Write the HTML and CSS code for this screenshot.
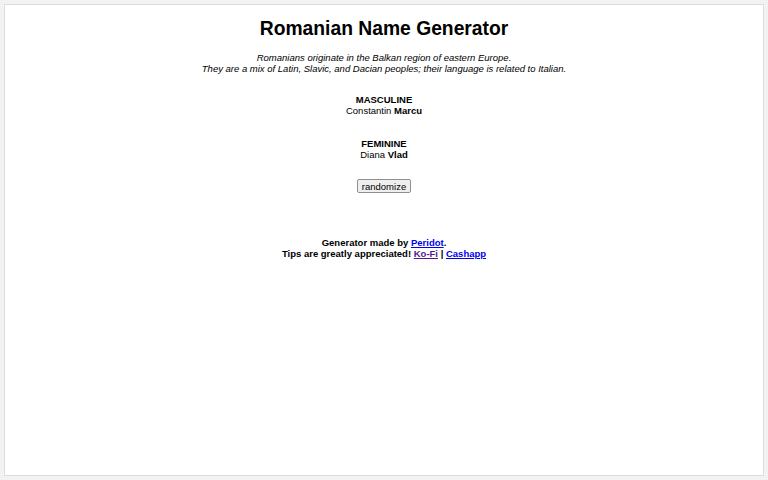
FILE: index.html
```html
<!DOCTYPE html>
<html lang="en">
<head>
<meta charset="utf-8">
<title>Romanian Name Generator</title>
<link rel="stylesheet" href="styles.css">
</head>
<body>
<main class="sheet">
  <h1 class="title">Romanian Name Generator</h1>
  <p class="intro">Romanians originate in the Balkan region of eastern Europe.<br>They are a mix of Latin, Slavic, and Dacian peoples; their language is related to Italian.</p>

  <section class="group">
    <div class="label">MASCULINE</div>
    <div class="name">Constantin <b>Marcu</b></div>
  </section>

  <section class="group">
    <div class="label">FEMININE</div>
    <div class="name">Diana <b>Vlad</b></div>
  </section>

  <div class="actions"><button class="btn" type="button">randomize</button></div>

  <footer class="credits">
    Generator made by <a href="#">Peridot</a>.<br>
    Tips are greatly appreciated! <a href="#" class="visited">Ko-Fi</a> | <a href="#">Cashapp</a>
  </footer>
</main>
</body>
</html>
```
FILE: styles.css
```css
html, body {
  margin: 0;
  padding: 0;
}
body {
  background: #f2f2f2;
  padding: 4px;
  font-family: "Liberation Sans", Arial, sans-serif;
  color: #000;
  height: 480px;
  box-sizing: border-box;
}
.sheet {
  background: #fff;
  border: 1px solid #dcdcdc;
  height: 100%;
  box-sizing: border-box;
  text-align: center;
  padding-top: 12px;
}
.title {
  font-size: 19.3px;
  font-weight: bold;
  margin: 0;
  line-height: 23px;
}
.intro {
  font-style: italic;
  font-size: 9.5px;
  line-height: 11px;
  margin: 12px 0 0;
}
.group {
  margin-top: 20px;
  font-size: 9.5px;
  line-height: 11px;
}
.group + .group {
  margin-top: 22px;
}
.label {
  font-weight: bold;
}
.actions {
  margin-top: 19px;
  display: flex;
  justify-content: center;
}
.btn {
  font-family: "Liberation Sans", Arial, sans-serif;
  font-size: 9.5px;
  line-height: 11px;
  height: 14px;
  box-sizing: border-box;
  padding: 0 4px;
  background: #efefef;
  border: 1px solid #8f8f8f;
  border-radius: 2px;
  color: #000;
}
.credits {
  margin-top: 44px;
  font-size: 9.5px;
  line-height: 11px;
  font-weight: bold;
}
.credits a {
  color: #0000ee;
}
.credits a.visited {
  color: #551a8b;
}
```
